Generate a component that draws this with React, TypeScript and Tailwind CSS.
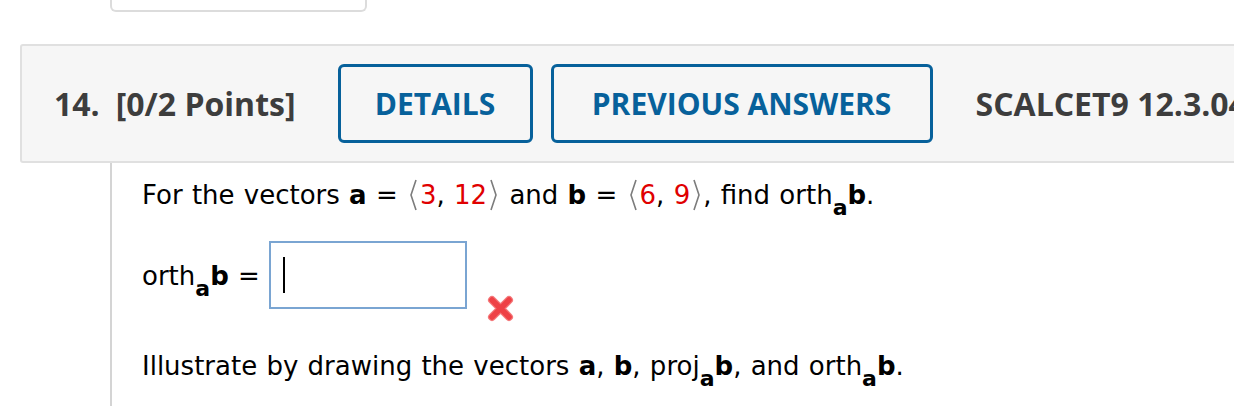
import React from "react";

function Sub({ children }: { children: React.ReactNode }) {
  return <span className="align-[-11px] text-[22px] leading-none font-bold">{children}</span>;
}

function Bracket({ side }: { side: "l" | "r" }) {
  return (
    <svg width="9" height="32" viewBox="0 0 9 32" className="inline-block align-[-7px] mx-[2px]">
      <path
        d={side === "l" ? "M7 1 L2 16 L7 31" : "M2 1 L7 16 L2 31"}
        fill="none"
        stroke="#7c7c7c"
        strokeWidth="1.6"
      />
    </svg>
  );
}

function Vec({ x, y }: { x: string; y: string }) {
  return (
    <span>
      <Bracket side="l" />
      <span className="text-[#e00000]">{x}</span>, <span className="text-[#e00000]">{y}</span>
      <Bracket side="r" />
    </span>
  );
}

function WrongMark() {
  return (
    <svg width="27" height="27" viewBox="0 0 27 27" className="self-start mt-[54px] ml-[20px] shrink-0">
      <path d="M5 5 L22 22 M22 5 L5 22" stroke="#f4797b" strokeWidth="8" strokeLinecap="round" />
      <path d="M5 5 L22 22 M22 5 L5 22" stroke="#ee4146" strokeWidth="5.5" strokeLinecap="round" />
    </svg>
  );
}

export default function App() {
  return (
    <div className="w-[1234px] h-[406px] overflow-hidden bg-white">
      <div className="ml-[110px] w-[257px] h-[12px] border-2 border-t-0 border-[#dcdcdc] rounded-b-[6px]" />

      <div className="mt-[32px] ml-[20px] w-[1300px] h-[119px] border-2 border-[#e0e0e0] rounded-[3px] bg-[#f6f6f6] flex items-center font-['Open_Sans',sans-serif] font-bold text-[32px] text-[#3d3d3d]">
        <span className="ml-[32px]">14.</span>
        <span className="ml-[16px]">[0/2 Points]</span>
        <button className="ml-[42px] w-[195px] h-[79px] border-[3px] border-[#07619b] rounded-[6px] text-[#07619b] text-[30px] font-bold">
          DETAILS
        </button>
        <button className="ml-[18px] w-[382px] h-[79px] border-[3px] border-[#07619b] rounded-[6px] text-[#07619b] text-[30px] font-bold">
          PREVIOUS ANSWERS
        </button>
        <span className="ml-[43px] whitespace-nowrap">SCALCET9 12.3.041.</span>
      </div>

      <div className="ml-[110px] h-[300px] border-l-2 border-[#d4d4d4] pl-[30px] pt-[16px] font-['DejaVu_Sans',Verdana,sans-serif] text-[26px] leading-[30px] [word-spacing:1px] text-black">
        <p className="h-[30px] whitespace-nowrap">
          For the vectors <b>a</b> = <Vec x="3" y="12" /> and <b>b</b> = <Vec x="6" y="9" />, find orth<Sub>a</Sub><b>b</b>.
        </p>

        <div className="mt-[32px] h-[68px] flex items-start">
          <span className="h-[30px] mt-[20px] whitespace-nowrap">
            orth<Sub>a</Sub><b>b</b> =
          </span>
          <div className="ml-[9px] w-[198px] h-[68px] shrink-0 border-2 border-[#7aa5d2] bg-white flex items-center pl-[12px]">
            <div className="w-[2px] h-[36px] bg-black" />
          </div>
          <WrongMark />
        </div>

        <p className="mt-[42px] h-[30px] whitespace-nowrap">
          Illustrate by drawing the vectors <b>a</b>, <b>b</b>, proj<Sub>a</Sub><b>b</b>, and orth<Sub>a</Sub><b>b</b>.
        </p>
      </div>
    </div>
  );
}
